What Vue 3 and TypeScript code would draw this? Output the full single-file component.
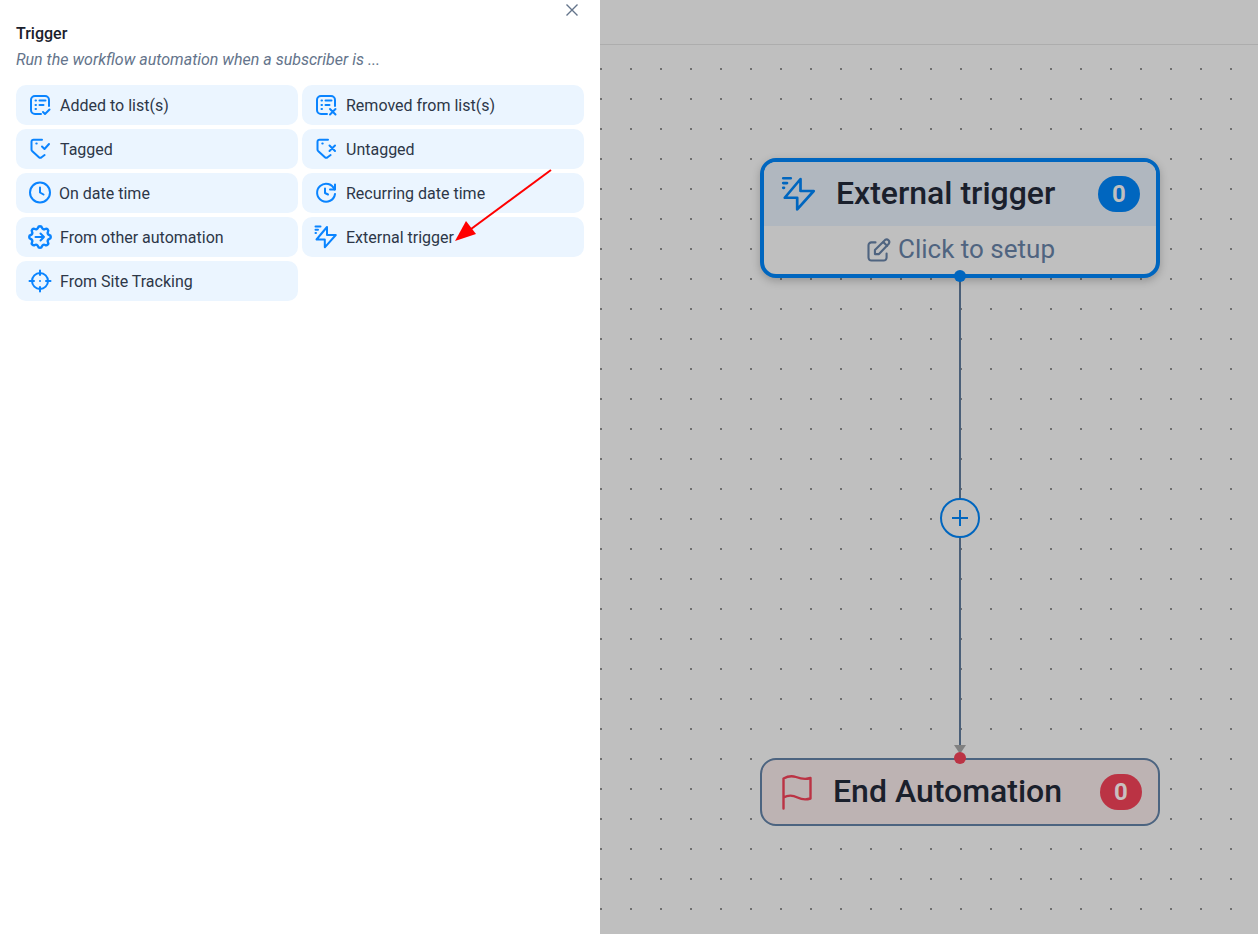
<script setup lang="ts">
interface Item { label: string; icon: string; tight?: boolean }
const items: Item[] = [
  { label: 'Added to list(s)', icon: 'list-check' },
  { label: 'Removed from list(s)', icon: 'list-x' },
  { label: 'Tagged', icon: 'tag-check' },
  { label: 'Untagged', icon: 'tag-x' },
  { label: 'On date time', icon: 'clock', tight: true },
  { label: 'Recurring date time', icon: 'recur' },
  { label: 'From other automation', icon: 'gear' },
  { label: 'External trigger', icon: 'bolt' },
  { label: 'From Site Tracking', icon: 'target' },
]
const boltBody = 'M13 2 2.500 14.500H10.800V22.300L21.800 10H13z'
const boltLines = 'M1.500 1.500h5M1.500 4.700h2.500M1.500 7.900h.5'
</script>

<template>
  <div class="page">
    <aside class="panel">
      <button class="close" type="button" aria-label="Close">
        <svg width="14" height="14" viewBox="0 0 14 14"><path d="M1.500 1.500l11 11M12.500 1.500l-11 11" /></svg>
      </button>
      <h2 class="title">Trigger</h2>
      <p class="subtitle">Run the workflow automation when a subscriber is ...</p>
      <div class="grid">
        <div v-for="it in items" :key="it.label" class="item" :class="{ tight: it.tight }">
          <svg class="icon" width="24" height="24" viewBox="0 0 24 24">
            <template v-if="it.icon === 'list-check' || it.icon === 'list-x'">
              <path d="M13 21H7a4 4 0 0 1-4-4V7a4 4 0 0 1 4-4h10a4 4 0 0 1 4 4v6" />
              <path d="M7.500 7.500h.5M7.500 12h.5M7.500 16h.5M11.500 7.500h6M11.500 12h4" />
              <path v-if="it.icon === 'list-check'" d="M15 19l2 2 4.500-4.500" />
              <path v-else d="M16 16l5.500 5.500M21.500 16L16 21.500" />
            </template>
            <template v-else-if="it.icon === 'tag-check' || it.icon === 'tag-x'">
              <path d="M14 2.700H5.500a2 2 0 0 0-2 2v7.800a2 2 0 0 0 .6 1.400l6.800 6.300a2 2 0 0 0 2.700 0l3-2.200" />
              <path d="M8.300 6.500h.4" />
              <path v-if="it.icon === 'tag-check'" d="M14 9.500l2.500 2.500L21 7" />
              <path v-else d="M15.500 8.500l5.500 5.500M21 8.500L15.500 14" />
            </template>
            <template v-else-if="it.icon === 'clock'">
              <circle cx="12" cy="11.500" r="10" />
              <path d="M12 6.500v5l3.500 2" />
            </template>
            <template v-else-if="it.icon === 'recur'">
              <path d="M20.500 8.500A9 9 0 1 0 21 13" />
              <path d="M21 3.500v5h-5" />
              <path d="M11 7.500V12l3 1.500" />
            </template>
            <template v-else-if="it.icon === 'gear'">
              <path d="M10.325 4.317c.426-1.756 2.924-1.756 3.350 0a1.724 1.724 0 0 0 2.573 1.066c1.543-.94 3.310.826 2.370 2.370a1.724 1.724 0 0 0 1.065 2.572c1.756.426 1.756 2.924 0 3.350a1.724 1.724 0 0 0-1.066 2.573c.94 1.543-.826 3.310-2.370 2.370a1.724 1.724 0 0 0-2.572 1.065c-.426 1.756-2.924 1.756-3.350 0a1.724 1.724 0 0 0-2.573-1.066c-1.543.94-3.310-.826-2.370-2.370a1.724 1.724 0 0 0-1.065-2.572c-1.756-.426-1.756-2.924 0-3.350a1.724 1.724 0 0 0 1.066-2.573c-.94-1.543.826-3.310 2.370-2.370c1 .608 2.296.07 2.572-1.065z" transform="translate(-2.400 -2.400) scale(1.200)" />
              <path d="M7.500 12h8.500M12.500 8.500L16 12l-3.500 3.500" />
            </template>
            <template v-else-if="it.icon === 'bolt'">
              <path :d="boltBody" />
              <path :d="boltLines" />
            </template>
            <template v-else>
              <circle cx="12" cy="12" r="8" />
              <path d="M12 1.500V6M12 18v4.500M1.500 12H6M18 12h4.500M12 12h.01" />
            </template>
          </svg>
          <span>{{ it.label }}</span>
        </div>
      </div>
      <svg class="pointer" width="110" height="84" viewBox="0 0 110 84">
        <line x1="100" y1="1" x2="16" y2="63" />
        <polygon points="4,72 15,52 25,65" />
      </svg>
    </aside>

    <main class="canvas">
      <header class="topbar"></header>
      <section class="stage">
        <div class="line"></div>
        <div class="arrowhead"></div>

        <div class="node trigger-node">
          <div class="node-head">
            <svg class="node-bolt" width="36" height="36" viewBox="0 0 24 24">
              <path :d="boltBody" />
              <path :d="boltLines" />
            </svg>
            <span class="node-title">External trigger</span>
            <span class="badge blue">0</span>
          </div>
          <div class="node-foot">
            <svg class="edit" width="28" height="28" viewBox="0 0 24 24">
              <path d="M9 5.500H5.500A2.500 2.500 0 0 0 3 8v10.500A2.500 2.500 0 0 0 5.500 21H16a2.500 2.500 0 0 0 2.500-2.500V15" />
              <path d="M20.400 6.600a2.300 2.300 0 0 0-3.200-3.200L8.500 12v3.500H12zM15.500 5L19 8.500" />
            </svg>
            <span class="foot-label">Click to setup</span>
          </div>
          <i class="handle blue-dot"></i>
        </div>

        <button class="add" type="button" aria-label="Add step">
          <svg width="18" height="18" viewBox="0 0 18 18"><path d="M9 1v16M1 9h16" /></svg>
        </button>

        <div class="node end-node">
          <svg class="flag" width="36" height="36" viewBox="0 0 36 36">
            <path d="M4.500 34.500V4.500C9 2 13 1.500 17 3s10 2.500 14.500 1v20.500c-4.500 1.500-9 1-13-1s-9.500-2.500-14 0" />
          </svg>
          <span class="node-title">End Automation</span>
          <span class="badge red">0</span>
          <i class="handle red-dot"></i>
        </div>
      </section>
    </main>
  </div>
</template>

<style>
html, body { margin: 0; padding: 0; background: #fff; }
</style>

<style scoped>
.page {
  width: 1258px;
  height: 934px;
  display: flex;
  overflow: hidden;
  font-family: Roboto, "Liberation Sans", sans-serif;
}
.panel {
  position: relative;
  width: 600px;
  flex: none;
  box-sizing: border-box;
  padding: 24px 16px 0;
  background: #fff;
}
.close {
  position: absolute;
  top: 3px;
  right: 21px;
  padding: 0;
  width: 14px;
  height: 14px;
  display: block;
  border: 0;
  background: none;
}
.close svg { display: block; fill: none; stroke: #64748b; stroke-width: 1.400; }
.title {
  margin: 0;
  font-size: 16px;
  line-height: 19px;
  font-weight: 500;
  color: #1a202c;
}
.subtitle {
  margin: 7px 0 0;
  font-size: 16px;
  line-height: 19px;
  font-style: italic;
  color: #64748b;
}
.grid {
  margin-top: 16px;
  display: grid;
  grid-template-columns: 1fr 1fr;
  gap: 4px;
}
.item {
  height: 40px;
  box-sizing: border-box;
  padding-left: 12px;
  display: flex;
  align-items: center;
  gap: 8px;
  border-radius: 10px;
  background: #ebf5ff;
  font-size: 16px;
  color: #2d3748;
}
.item.tight { gap: 7px; }
.icon {
  flex: none;
  fill: none;
  stroke: #0a84ff;
  stroke-width: 2;
  stroke-linecap: round;
  stroke-linejoin: round;
}
.pointer {
  position: absolute;
  left: 451px;
  top: 169px;
}
.pointer line { stroke: #ff0000; stroke-width: 2; }
.pointer polygon { fill: #ff0000; }

.canvas {
  flex: 1;
  display: flex;
  flex-direction: column;
  background: #bfbfbf;
}
.topbar {
  height: 44px;
  flex: none;
  border-bottom: 1px solid #adadad;
}
.stage {
  position: relative;
  flex: 1;
  background-image: radial-gradient(circle at 1px 1px, #6f6f6f 0.9px, transparent 1px);
  background-size: 30px 30px;
  background-position: 0 23px;
}
.line {
  position: absolute;
  left: 359px;
  top: 231px;
  width: 2px;
  height: 470px;
  background: #4a5f78;
}
.arrowhead {
  position: absolute;
  left: 354px;
  top: 700px;
  width: 0;
  height: 0;
  border-left: 6px solid transparent;
  border-right: 6px solid transparent;
  border-top: 9px solid #808080;
}
.node {
  position: absolute;
  left: 160px;
  width: 400px;
  box-sizing: border-box;
  color: #1a202c;
}
.trigger-node {
  top: 113px;
  height: 120px;
  border: 4px solid #0066bf;
  border-radius: 16px;
  background: #bfbfbf;
  box-shadow: 0 3px 8px rgba(0, 0, 0, 0.22);
}
.node-head {
  height: 64px;
  display: flex;
  align-items: center;
  padding: 0 16px 0 17px;
  border-radius: 12px 12px 0 0;
  background: #b0b7bf;
}
.node-bolt {
  flex: none;
  fill: none;
  stroke: #0066bf;
  stroke-width: 1.800;
  stroke-linecap: round;
  stroke-linejoin: round;
}
.node-title {
  flex: 1;
  padding-bottom: 2px;
  font-size: 32px;
  font-weight: 500;
  line-height: 36px;
}
.trigger-node .node-title { margin-left: 19px; }
.badge {
  flex: none;
  width: 42px;
  height: 36px;
  border-radius: 18px;
  display: flex;
  align-items: center;
  justify-content: center;
  font-size: 24px;
  font-weight: 700;
  color: #bfbfbf;
}
.badge.blue { background: #0066bf; }
.badge.red { background: #bb3344; color: #c9c0c0; }
.node-foot {
  height: 48px;
  display: flex;
  align-items: center;
  justify-content: center;
  gap: 5px;
  font-size: 26px;
  color: #4f6480;
}
.foot-label { padding-bottom: 2px; }
.edit {
  fill: none;
  stroke: #4f6480;
  stroke-width: 1.800;
  stroke-linecap: round;
  stroke-linejoin: round;
}
.handle {
  position: absolute;
  left: 50%;
  width: 12px;
  height: 12px;
  margin-left: -6px;
  border-radius: 50%;
}
.blue-dot { bottom: -8px; background: #0066bf; }
.red-dot { top: -8px; background: #bb3344; }
.add {
  position: absolute;
  left: 340px;
  top: 453px;
  width: 40px;
  height: 40px;
  box-sizing: border-box;
  padding: 0;
  display: flex;
  align-items: center;
  justify-content: center;
  border: 2px solid #0066bf;
  border-radius: 50%;
  background: #bfbfbf;
}
.add svg { display: block; fill: none; stroke: #0066bf; stroke-width: 2; }
.end-node {
  top: 713px;
  height: 68px;
  display: flex;
  align-items: center;
  padding: 0 16px 0 17px;
  border: 2px solid #4c6480;
  border-radius: 16px;
  background: #bdb3b3;
}
.flag {
  flex: none;
  fill: none;
  stroke: #bb3344;
  stroke-width: 2.400;
  stroke-linecap: round;
  stroke-linejoin: round;
}
.end-node .node-title { margin-left: 18px; }
</style>
